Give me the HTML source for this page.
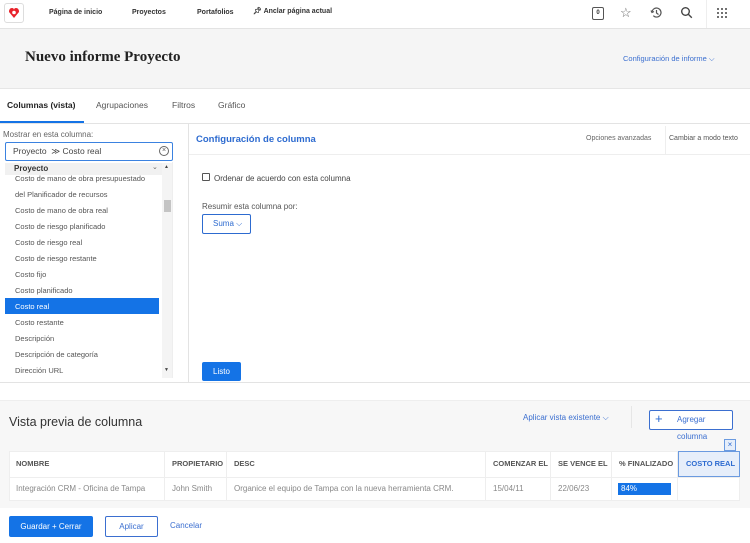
<!DOCTYPE html><html><head><meta charset="utf-8"><style>
*{box-sizing:border-box;margin:0;padding:0}
body{width:750px;height:543px;overflow:hidden;font-family:"Liberation Sans",Arial,sans-serif;background:#fff;position:relative;color:#333}
.a{position:absolute;white-space:nowrap}
.nav{font-size:7px;font-weight:bold;color:#333}
.li{position:absolute;left:15px;font-size:7.5px;color:#555}
.th{position:absolute;top:451px;height:26px;font-size:7.5px;font-weight:bold;color:#555;line-height:26px;padding-left:7px;border-right:1px solid #eee}
.td{position:absolute;top:478px;height:22px;font-size:8px;color:#888;line-height:22px;padding-left:7px;border-right:1px solid #eee}
</style></head><body>
<div class="a" style="left:0;top:0;width:750px;height:29px;border-bottom:1px solid #e3e3e3;background:#fff"></div>
<div class="a" style="left:4px;top:3px;width:20px;height:20px;border:1px solid #ddd;border-radius:3px;background:#fff"></div>
<svg class="a" style="left:8px;top:7px" width="12" height="12" viewBox="0 0 12 12"><path d="M6 11 L1 5 Q1 1 4 1 Q6 1 6 3 Q6 1 8 1 Q11 1 11 5Z" fill="#e8222b"/><circle cx="6" cy="5.5" r="1.8" fill="#fff"/></svg>
<div class="a nav" style="left:49px;top:9px">Página de inicio</div>
<div class="a nav" style="left:132px;top:9px">Proyectos</div>
<div class="a nav" style="left:197px;top:9px">Portafolios</div>
<div class="a nav" style="left:253px;top:7px">📌︎ Anclar página actual</div>
<div class="a" style="left:592px;top:7px;width:12px;height:13px;border:1.3px solid #555;border-radius:2px;font-size:6px;text-align:center;line-height:10px;font-weight:bold">0</div>
<div class="a" style="left:620px;top:5px;font-size:13px;color:#666">☆</div>
<svg class="a" style="left:650px;top:6px" width="13" height="13" viewBox="0 0 13 13" fill="none" stroke="#555" stroke-width="1.2"><path d="M2 6.5a4.5 4.5 0 1 1 1.3 3.2"/><path d="M6.5 4v3l2 1.5"/><path d="M1 4.5l1 2 2-1"/></svg>
<svg class="a" style="left:680px;top:6px" width="13" height="13" viewBox="0 0 13 13" fill="none" stroke="#444" stroke-width="1.4"><circle cx="5.5" cy="5.5" r="3.8"/><path d="M8.3 8.3l3.5 3.5"/></svg>
<div class="a" style="left:706px;top:0;width:1px;height:28px;background:#eee"></div>
<svg class="a" style="left:716px;top:7px" width="12" height="12" viewBox="0 0 12 12" fill="#444"><circle cx="2" cy="2" r="1"/><circle cx="6" cy="2" r="1"/><circle cx="10" cy="2" r="1"/><circle cx="2" cy="6" r="1"/><circle cx="6" cy="6" r="1"/><circle cx="10" cy="6" r="1"/><circle cx="2" cy="10" r="1"/><circle cx="6" cy="10" r="1"/><circle cx="10" cy="10" r="1"/></svg>
<div class="a" style="left:0;top:29px;width:750px;height:60px;background:#f5f5f5;border-bottom:1px solid #e6e6e6"></div>
<div class="a" style="left:25px;top:49px;font-family:'Liberation Serif',serif;font-weight:bold;font-size:15px;color:#222">Nuevo informe Proyecto</div>
<div class="a" style="left:623px;top:54px;font-size:7.5px;color:#3b6fd0">Configuración de informe ⌵</div>
<div class="a" style="left:7px;top:100px;font-size:8.5px;font-weight:bold;color:#222">Columnas (vista)</div>
<div class="a" style="left:96px;top:100px;font-size:8.5px;color:#555">Agrupaciones</div>
<div class="a" style="left:172px;top:100px;font-size:8.5px;color:#555">Filtros</div>
<div class="a" style="left:218px;top:100px;font-size:8.5px;color:#555">Gráfico</div>
<div class="a" style="left:0;top:121px;width:84px;height:2px;background:#1473e6"></div>
<div class="a" style="left:0;top:123px;width:750px;height:1px;background:#e3e3e3"></div>
<div class="a" style="left:188px;top:124px;width:1px;height:258px;background:#e3e3e3"></div>
<div class="a" style="left:3px;top:130px;font-size:8px;color:#666">Mostrar en esta columna:</div>
<div class="a" style="left:5px;top:142px;width:168px;height:19px;border:1px solid #3b82e0;border-radius:2px;font-size:8.5px;color:#444;padding:3px 0 0 7px">Proyecto &nbsp;≫ Costo real</div>
<div class="a" style="left:159px;top:146px;width:10px;height:10px;border:1px solid #666;border-radius:50%;font-size:7px;text-align:center;line-height:8px;color:#555">×</div>
<div class="a" style="left:5px;top:162px;width:168px;height:216px;border-right:1px solid #eee"></div>
<div class="a" style="left:5px;top:163px;width:157px;height:12px;background:#f1f1f1"></div>
<div class="a" style="left:14px;top:164px;font-size:8px;font-weight:bold;color:#333">Proyecto</div>
<div class="a" style="left:152px;top:163px;font-size:7px;color:#666">⌄</div>
<div class="a" style="left:162px;top:163px;width:10px;height:215px;background:#f4f4f4"></div>
<div class="a" style="left:164px;top:200px;width:7px;height:12px;background:#c4c4c4"></div>
<div class="a" style="left:164px;top:164px;font-size:5px;color:#444">▲</div>
<div class="a" style="left:164px;top:367px;font-size:5px;color:#444">▼</div>
<div class="li" style="top:174px">Costo de mano de obra presupuestado</div>
<div class="li" style="top:190px">del Planificador de recursos</div>
<div class="li" style="top:206px">Costo de mano de obra real</div>
<div class="li" style="top:222px">Costo de riesgo planificado</div>
<div class="li" style="top:238px">Costo de riesgo real</div>
<div class="li" style="top:254px">Costo de riesgo restante</div>
<div class="li" style="top:270px">Costo fijo</div>
<div class="li" style="top:286px">Costo planificado</div>
<div class="a" style="left:5px;top:298px;width:154px;height:16px;background:#1473e6"></div>
<div class="li" style="top:302px;color:#fff">Costo real</div>
<div class="li" style="top:318px">Costo restante</div>
<div class="li" style="top:334px">Descripción</div>
<div class="li" style="top:350px">Descripción de categoría</div>
<div class="li" style="top:366px">Dirección URL</div>
<div class="a" style="left:196px;top:134px;font-size:9.5px;font-weight:bold;color:#2d6bd0">Configuración de columna</div>
<div class="a" style="left:586px;top:135px;font-size:7px;color:#666">Opciones avanzadas</div>
<div class="a" style="left:665px;top:126px;width:1px;height:28px;background:#eee"></div>
<div class="a" style="left:669px;top:135px;font-size:7px;color:#555">Cambiar a modo texto</div>
<div class="a" style="left:189px;top:154px;width:561px;height:1px;background:#eee"></div>
<div class="a" style="left:202px;top:173px;width:8px;height:8px;border:1px solid #555;border-radius:1px"></div>
<div class="a" style="left:214px;top:174px;font-size:8px;color:#444">Ordenar de acuerdo con esta columna</div>
<div class="a" style="left:202px;top:202px;font-size:8px;color:#555">Resumir esta columna por:</div>
<div class="a" style="left:202px;top:214px;width:49px;height:20px;border:1.3px solid #2d6bd0;border-radius:2px;font-size:8px;color:#2d6bd0;padding:4px 0 0 10px">Suma ⌵</div>
<div class="a" style="left:202px;top:362px;width:39px;height:19px;background:#1473e6;border-radius:2px;font-size:8px;color:#fff;text-align:center;line-height:19px">Listo</div>
<div class="a" style="left:0;top:382px;width:750px;height:1px;background:#e3e3e3"></div>
<div class="a" style="left:0;top:400px;width:750px;height:108px;background:#f7f7f7;border-top:1px solid #eee"></div>
<div class="a" style="left:9px;top:415px;font-size:12.5px;color:#333">Vista previa de columna</div>
<div class="a" style="left:523px;top:413px;font-size:8px;color:#3b6fd0">Aplicar vista existente ⌵</div>
<div class="a" style="left:631px;top:406px;width:1px;height:22px;background:#e6e6e6"></div>
<div class="a" style="left:649px;top:410px;width:84px;height:20px;border:1px solid #3b6fd0;border-radius:2px;background:#fff"></div>
<div class="a" style="left:655px;top:411px;font-size:13px;color:#2d6bd0">+</div>
<div class="a" style="left:677px;top:415px;font-size:8px;color:#3b6fd0">Agregar</div>
<div class="a" style="left:677px;top:432px;font-size:8px;color:#3b6fd0">columna</div>
<div class="a" style="left:724px;top:439px;width:12px;height:12px;border:1px solid #6a9ae0;background:#e6eefa;font-size:8px;text-align:center;line-height:10px;color:#2d6bd0">×</div>
<div class="a" style="left:9px;top:451px;width:731px;height:50px;background:#fff;border:1px solid #eee"></div>
<div class="a" style="left:9px;top:477px;width:731px;height:1px;background:#eee"></div>
<div class="th" style="left:9px;width:156px">NOMBRE</div>
<div class="th" style="left:165px;width:62px">PROPIETARIO</div>
<div class="th" style="left:227px;width:259px">DESC</div>
<div class="th" style="left:486px;width:65px">COMENZAR EL</div>
<div class="th" style="left:551px;width:61px">SE VENCE EL</div>
<div class="th" style="left:612px;width:66px">% FINALIZADO</div>
<div class="th" style="left:678px;width:62px;background:#e6eefa;border:1px solid #6a9ae0;color:#2d6bd0;line-height:24px">COSTO REAL</div>
<div class="td" style="left:9px;width:156px">Integración CRM - Oficina de Tampa</div>
<div class="td" style="left:165px;width:62px">John Smith</div>
<div class="td" style="left:227px;width:259px">Organice el equipo de Tampa con la nueva herramienta CRM.</div>
<div class="td" style="left:486px;width:65px">15/04/11</div>
<div class="td" style="left:551px;width:61px">22/06/23</div>
<div class="td" style="left:612px;width:66px"></div>
<div class="a" style="left:618px;top:483px;width:53px;height:12px;background:#1473e6;font-size:8px;color:#fff;padding-left:3px;line-height:12px">84%</div>
<div class="a" style="left:9px;top:516px;width:84px;height:21px;background:#1473e6;border-radius:2px;font-size:8px;color:#fff;text-align:center;line-height:21px">Guardar + Cerrar</div>
<div class="a" style="left:105px;top:516px;width:53px;height:21px;border:1px solid #3b6fd0;border-radius:2px;font-size:8px;color:#3b6fd0;text-align:center;line-height:19px">Aplicar</div>
<div class="a" style="left:170px;top:521px;font-size:8px;color:#3b6fd0">Cancelar</div>
</body></html>
